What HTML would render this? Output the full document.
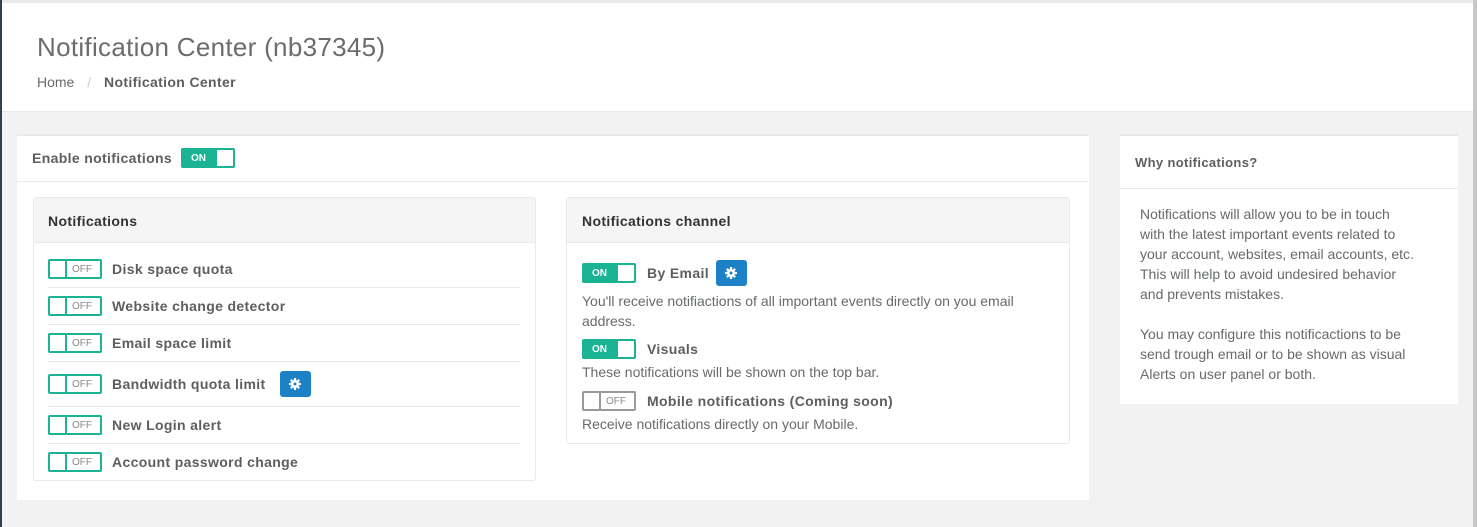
<!DOCTYPE html>
<html><head><meta charset="utf-8"><style>
*{box-sizing:border-box;margin:0;padding:0}
body{width:1477px;height:527px;overflow:hidden;background:#f2f2f2;font-family:"Liberation Sans",sans-serif;color:#676a6c;font-size:14px;position:relative}
.a{position:absolute}
.tg{position:absolute;width:54px;height:20px;border:2px solid #1ab394;border-radius:2px;background:#fff}
.tg.off::before{content:"";position:absolute;left:15px;top:-2px;width:2px;height:20px;background:#1ab394}
.tg.off span{position:absolute;left:22px;top:3px;font-size:10px;color:#888}
.tg.on{background:#1ab394}
.tg.on span{position:absolute;left:8px;top:3px;font-size:10px;color:#fff;font-weight:bold}
.tg.on::after{content:"";position:absolute;right:0;top:0;width:16px;height:16px;background:#fff}
.tg.gray{border-color:#9a9a9a}
.tg.gray::before{background:#9a9a9a}
.lbl{position:absolute;font-weight:bold;color:#5e5e5e;font-size:14px;letter-spacing:0.35px}
.gear{position:absolute;width:31px;height:26px;background:#1c81c7;border-radius:3px}
.gear svg{position:absolute;left:9px;top:7px}
.hr{position:absolute;height:1px;background:#e7eaec}
</style></head><body>
<div class="a" style="left:0;top:0;width:2px;height:527px;background:#2f4050"></div>
<div class="a" style="left:1473px;top:0;width:4px;height:527px;background:#c8c8c8"></div>
<div class="a" style="left:2px;top:0;width:1471px;height:3px;background:#eaeaea"></div>
<div class="a" style="left:2px;top:3px;width:1471px;height:109px;background:#fff;border-bottom:1px solid #e7eaec"></div>
<div class="a" style="left:37px;top:32px;font-size:26px;font-weight:300;color:#6a6c6e;letter-spacing:0.3px">Notification Center (nb37345)</div>
<div class="a" style="left:37px;top:74px;font-size:14px;color:#676a6c">Home <span style="color:#ccc;margin:0 9px">/</span> <b style="color:#5e5e5e;letter-spacing:0.35px">Notification Center</b></div>

<div class="a" style="left:17px;top:134px;width:1072px;height:366px;background:#fff;border-top:2px solid #e7eaec"></div>
<div class="lbl" style="left:32px;top:150px">Enable notifications</div>
<div class="tg on" style="left:181px;top:148px"><span>ON</span></div>
<div class="hr" style="left:17px;top:181px;width:1072px"></div>

<div class="a" style="left:33px;top:197px;width:503px;height:284px;border:1px solid #e7eaec;border-radius:3px"></div>
<div class="a" style="left:34px;top:198px;width:501px;height:45px;background:#f5f5f5;border-bottom:1px solid #e7eaec"></div>
<div class="lbl" style="left:48px;top:213px;color:#333">Notifications</div>

<div class="tg off" style="left:48px;top:259px"><span>OFF</span></div><div class="lbl" style="left:112px;top:261px">Disk space quota</div>
<div class="hr" style="left:48px;top:287px;width:472px"></div>
<div class="tg off" style="left:48px;top:296px"><span>OFF</span></div><div class="lbl" style="left:112px;top:298px">Website change detector</div>
<div class="hr" style="left:48px;top:324px;width:472px"></div>
<div class="tg off" style="left:48px;top:333px"><span>OFF</span></div><div class="lbl" style="left:112px;top:335px">Email space limit</div>
<div class="hr" style="left:48px;top:361px;width:472px"></div>
<div class="tg off" style="left:48px;top:374px"><span>OFF</span></div><div class="lbl" style="left:112px;top:376px">Bandwidth quota limit</div>
<div class="gear" style="left:280px;top:371px"><svg width="12" height="12" viewBox="0 0 12 12"><circle cx="6" cy="6" r="4" fill="#fff"/><g stroke="#fff" stroke-width="2.2"><line x1="6" y1="0" x2="6" y2="12"/><line x1="0" y1="6" x2="12" y2="6"/><line x1="1.8" y1="1.8" x2="10.2" y2="10.2"/><line x1="10.2" y1="1.8" x2="1.8" y2="10.2"/></g><circle cx="6" cy="6" r="1.5" fill="#1c81c7"/></svg></div>
<div class="hr" style="left:48px;top:406px;width:472px"></div>
<div class="tg off" style="left:48px;top:415px"><span>OFF</span></div><div class="lbl" style="left:112px;top:417px">New Login alert</div>
<div class="hr" style="left:48px;top:443px;width:472px"></div>
<div class="tg off" style="left:48px;top:452px"><span>OFF</span></div><div class="lbl" style="left:112px;top:454px">Account password change</div>

<div class="a" style="left:566px;top:197px;width:504px;height:247px;border:1px solid #e7eaec;border-radius:3px"></div>
<div class="a" style="left:567px;top:198px;width:502px;height:45px;background:#f5f5f5;border-bottom:1px solid #e7eaec"></div>
<div class="lbl" style="left:582px;top:213px;color:#333">Notifications channel</div>
<div class="tg on" style="left:582px;top:263px"><span>ON</span></div><div class="lbl" style="left:647px;top:265px">By Email</div>
<div class="gear" style="left:716px;top:260px"><svg width="12" height="12" viewBox="0 0 12 12"><circle cx="6" cy="6" r="4" fill="#fff"/><g stroke="#fff" stroke-width="2.2"><line x1="6" y1="0" x2="6" y2="12"/><line x1="0" y1="6" x2="12" y2="6"/><line x1="1.8" y1="1.8" x2="10.2" y2="10.2"/><line x1="10.2" y1="1.8" x2="1.8" y2="10.2"/></g><circle cx="6" cy="6" r="1.5" fill="#1c81c7"/></svg></div>
<div class="a" style="left:582px;top:291px;line-height:20px">You'll receive notifiactions of all important events directly on you email<br>address.</div>
<div class="tg on" style="left:582px;top:339px"><span>ON</span></div><div class="lbl" style="left:647px;top:341px">Visuals</div>
<div class="a" style="left:582px;top:362px;line-height:20px">These notifications will be shown on the top bar.</div>
<div class="tg off gray" style="left:582px;top:391px"><span>OFF</span></div><div class="lbl" style="left:647px;top:393px">Mobile notifications (Coming soon)</div>
<div class="a" style="left:582px;top:414px;line-height:20px">Receive notifications directly on your Mobile.</div>

<div class="a" style="left:1120px;top:134px;width:338px;height:270px;background:#fff;border-top:2px solid #e7eaec"></div>
<div class="lbl" style="left:1135px;top:155px;font-size:13px">Why notifications?</div>
<div class="hr" style="left:1120px;top:188px;width:338px"></div>
<div class="a" style="left:1140px;top:204px;line-height:20px">Notifications will allow you to be in touch<br>with the latest important events related to<br>your account, websites, email accounts, etc.<br>This will help to avoid undesired behavior<br>and prevents mistakes.<br><br>You may configure this notificactions to be<br>send trough email or to be shown as visual<br>Alerts on user panel or both.</div>
</body></html>
